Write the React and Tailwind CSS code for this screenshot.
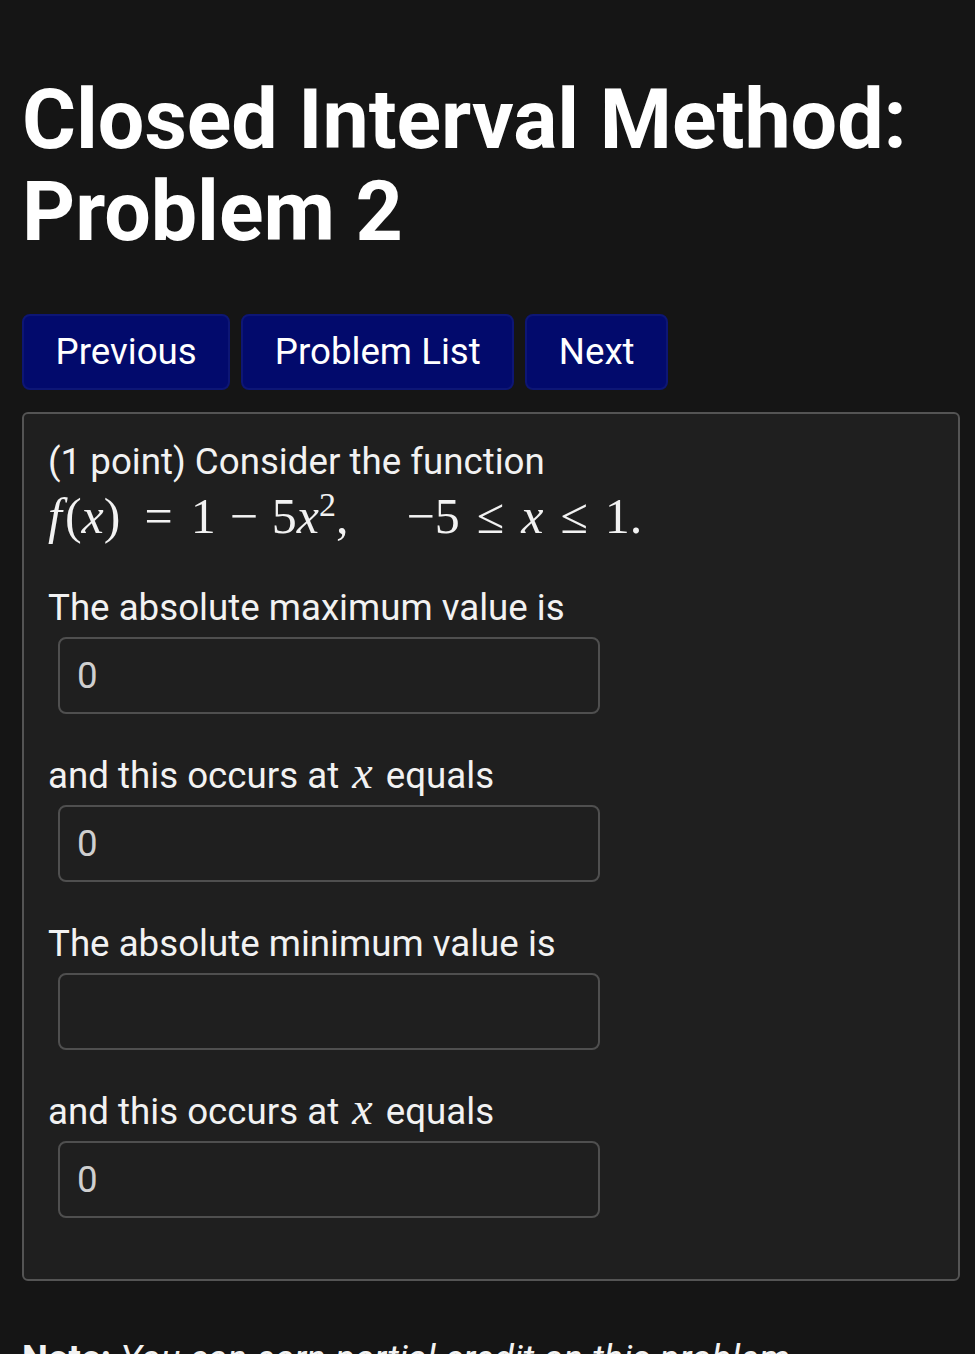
import React from "react";

const serif = { fontFamily: '"Liberation Serif", "DejaVu Serif", serif' };

const Mi = ({ children }) => <span className="italic">{children}</span>;

const AnswerBox = ({ value }) => (
  <input
    type="text"
    defaultValue={value}
    className="ml-[10px] mt-[2px] block h-[77px] w-[542px] rounded-lg border-2 border-[#4f4f4f] bg-[#1f1f1f] px-[17px] text-[36.7px] text-[#cfcfcf] outline-none"
  />
);

const MathX = () => (
  <span className="mx-[4px] text-[46px] italic leading-none" style={serif}>
    x
  </span>
);

const App = () => {
  const buttons = ["Previous", "Problem List", "Next"];

  return (
    <div
      className="min-h-[1354px] bg-[#151515] pl-[22px] pr-[15px] pt-[74px] text-[#f2f2f2]"
      style={{ fontFamily: "Roboto, 'Liberation Sans', sans-serif" }}
    >
      <h1 className="text-[82.5px] font-bold leading-[92px] text-white">
        Closed Interval Method: Problem 2
      </h1>

      <div className="mt-[56px] flex gap-[11px]">
        {buttons.map((label) => (
          <button
            key={label}
            className="h-[76px] rounded-lg border-2 border-[#0d1675] bg-[#020a6c] px-[31.5px] text-[36.7px] text-white"
          >
            {label}
          </button>
        ))}
      </div>

      <div className="mt-[22px] rounded-md border-2 border-[#545454] bg-[#1f1f1f] px-[24px] pb-[61px] pt-[21px] text-[36.7px] leading-[54px]">
        <p>(1 point) Consider the function</p>
        <p className="h-[54px] text-[50px] leading-[54px]" style={serif}>
          <Mi>f</Mi>
          <span className="ml-[3px]">(</span>
          <Mi>x</Mi>
          <span className="mr-[2px]">)</span>
          <span className="ml-[22px] mr-[18px]">=</span>1
          <span className="mx-[14px]">−</span>5<Mi>x</Mi>
          <sup className="text-[34px]">2</sup>,
          <span className="ml-[58px]">−5</span>
          <span className="mx-[17px]">≤</span>
          <Mi>x</Mi>
          <span className="mx-[17px]">≤</span>1.
        </p>

        <p className="mt-[38px]">The absolute maximum value is</p>
        <AnswerBox value="0" />

        <p className="mt-[35px]">
          and this occurs at <MathX /> equals
        </p>
        <AnswerBox value="0" />

        <p className="mt-[35px]">The absolute minimum value is</p>
        <AnswerBox value="" />

        <p className="mt-[35px]">
          and this occurs at <MathX /> equals
        </p>
        <AnswerBox value="0" />
      </div>

      <p className="mt-[51px] text-[36.7px] leading-[54px]">
        <span className="font-bold">Note:</span>{" "}
        <span className="italic">You can earn partial credit on this problem.</span>
      </p>
    </div>
  );
};

export default App;
